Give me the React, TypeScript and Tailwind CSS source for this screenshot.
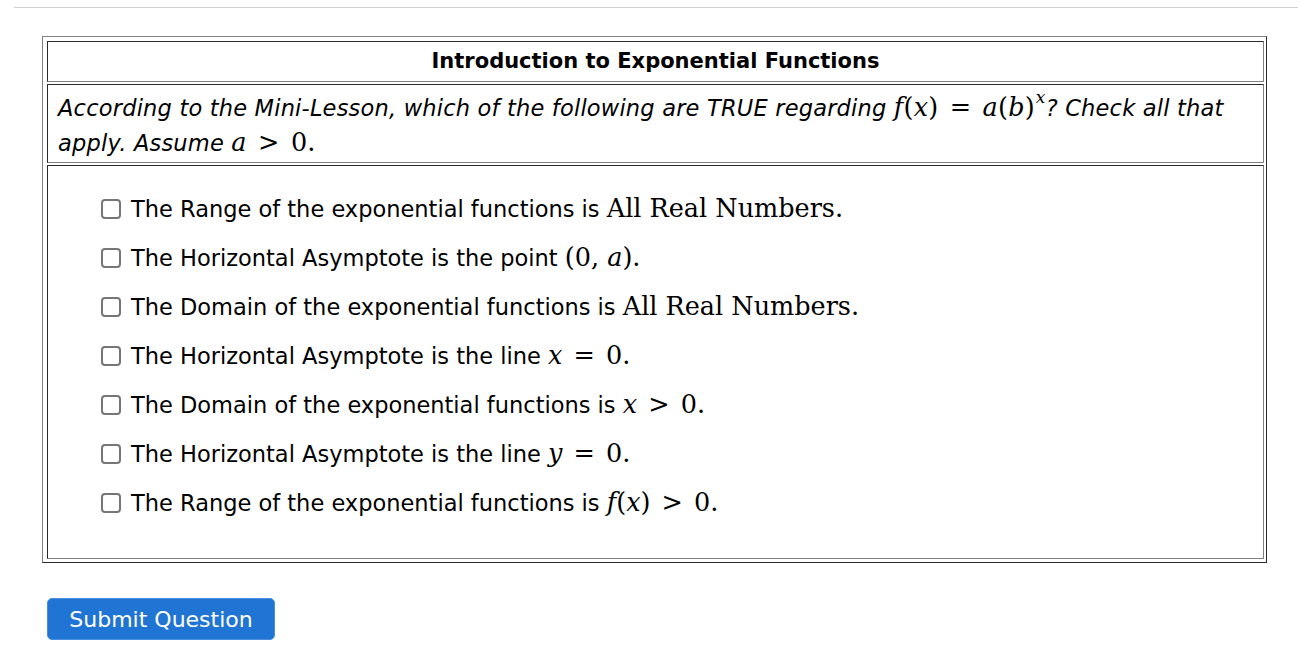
import React from "react";

const M = ({ children }: { children: React.ReactNode }) => (
  <span className="font-['DejaVu_Serif',serif] text-[25.5px] not-italic">{children}</span>
);

const V = ({ children }: { children: React.ReactNode }) => (
  <span className="font-['DejaVu_Serif',serif] italic">{children}</span>
);

const Op = ({ children }: { children: React.ReactNode }) => (
  <span className="px-[3px]">{children}</span>
);

const Box = () => (
  <span className="inline-block w-[20px] h-[20px] border-2 border-[#767676] rounded-[4px] bg-white shrink-0" />
);

const options: React.ReactNode[] = [
  <>The Range of the exponential functions is <M>All Real Numbers.</M></>,
  <>The Horizontal Asymptote is the point <M>(0, <V>a</V>).</M></>,
  <>The Domain of the exponential functions is <M>All Real Numbers.</M></>,
  <>The Horizontal Asymptote is the line <M><V>x</V> <Op>=</Op> 0.</M></>,
  <>The Domain of the exponential functions is <M><V>x</V> <Op>&gt;</Op> 0.</M></>,
  <>The Horizontal Asymptote is the line <M><V>y</V> <Op>=</Op> 0.</M></>,
  <>The Range of the exponential functions is <M><V>f</V>(<V>x</V>) <Op>&gt;</Op> 0.</M></>,
];

export default function App() {
  return (
    <div className="bg-white w-[1298px] h-[661px] font-['DejaVu_Sans',sans-serif] text-[22.5px] text-black">
      <div className="pt-[7px] pl-[14px]">
        <div className="h-px bg-[#d0d0d0]" />
      </div>
      <div className="ml-[42px] mt-[28px] w-[1225px] border border-t-[#808080] border-l-[#808080] border-r-[#2a2a2a] border-b-[#2a2a2a] pt-[4px] pl-[4px] pr-[2px] pb-[3px] flex flex-col gap-[2px]">
        <div className="h-[41px] border border-t-[#2a2a2a] border-l-[#2a2a2a] border-r-[#808080] border-b-[#808080] flex items-center justify-center font-bold text-[21px]">
          Introduction to Exponential Functions
        </div>
        <div className="h-[79px] border border-t-[#2a2a2a] border-l-[#2a2a2a] border-r-[#808080] border-b-[#808080] pl-[10px] pr-[4px] pt-[5px] italic leading-[34px] whitespace-nowrap tracking-[0.2px]">
          According to the Mini-Lesson, which of the following are TRUE regarding{" "}
          <M>
            <V>f</V>(<V>x</V>) <Op>=</Op> <V>a</V>(<V>b</V>)
            <span className="inline-block text-[17px] leading-none relative top-[-13px] pl-[1px]"><V>x</V></span>
          </M>
          ? Check all that
          <br />
          apply. Assume <M><V>a</V> <Op>&gt;</Op> 0.</M>
        </div>
        <div className="h-[394px] border border-t-[#2a2a2a] border-l-[#2a2a2a] border-r-[#808080] border-b-[#808080] pl-[53px] pt-[25px]">
          <div className="flex flex-col gap-[14px]">
            {options.map((o, k) => (
              <label key={k} className="flex items-center gap-[10px] h-[35px]">
                <Box />
                <span className="whitespace-nowrap">{o}</span>
              </label>
            ))}
          </div>
        </div>
      </div>
      <div className="ml-[47px] mt-[35px]">
        <button className="w-[228px] h-[42px] rounded-[5px] bg-[#1f74d4] border border-[#4a8fde] text-white text-[22px] font-['DejaVu_Sans',sans-serif]">
          Submit Question
        </button>
      </div>
    </div>
  );
}
